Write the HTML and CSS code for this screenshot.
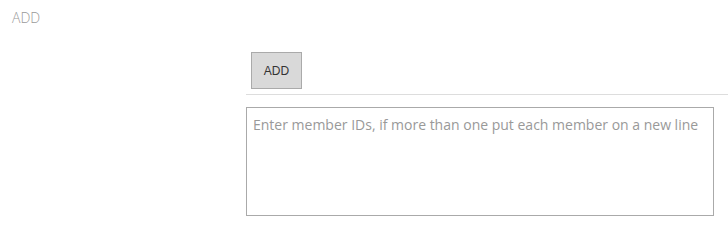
FILE: index.html
```html
<!DOCTYPE html>
<html>
<head>
<meta charset="utf-8">
<link rel="stylesheet" href="styles.css">
</head>
<body>
<div class="page">
  <div class="heading">ADD</div>
  <div class="form">
    <div class="actions">
      <button class="btn">ADD</button>
    </div>
    <textarea class="ids" placeholder="Enter member IDs, if more than one put each member on a new line"></textarea>
  </div>
</div>
</body>
</html>
```
FILE: styles.css
```css
html, body {
  margin: 0;
  padding: 0;
  background: #fff;
}
.page {
  font-family: "Open Sans", sans-serif;
  padding: 9px 0 0 12px;
}
.heading {
  font-size: 14px;
  line-height: 18px;
  color: #999;
  font-weight: 300;
}
.form {
  margin-left: 234px;
  margin-top: 25px;
}
.actions {
  padding-left: 5px;
  padding-bottom: 5px;
  border-bottom: 1px solid #ddd;
}
.btn {
  width: 51px;
  height: 37px;
  background: #d9d9d9;
  border: 1px solid #aaa;
  border-radius: 0;
  font-family: "Liberation Sans", Arial, sans-serif;
  font-size: 12px;
  color: #333;
  padding: 0;
  margin: 0;
  display: block;
}
.ids {
  display: block;
  box-sizing: border-box;
  margin-top: 12px;
  width: 468px;
  height: 109px;
  border: 1px solid #aaa;
  border-radius: 0;
  padding: 7px 6px;
  font-family: "Open Sans", sans-serif;
  font-size: 14px;
  resize: none;
  outline: none;
}
.ids::placeholder {
  color: #999;
  opacity: 1;
}
```
